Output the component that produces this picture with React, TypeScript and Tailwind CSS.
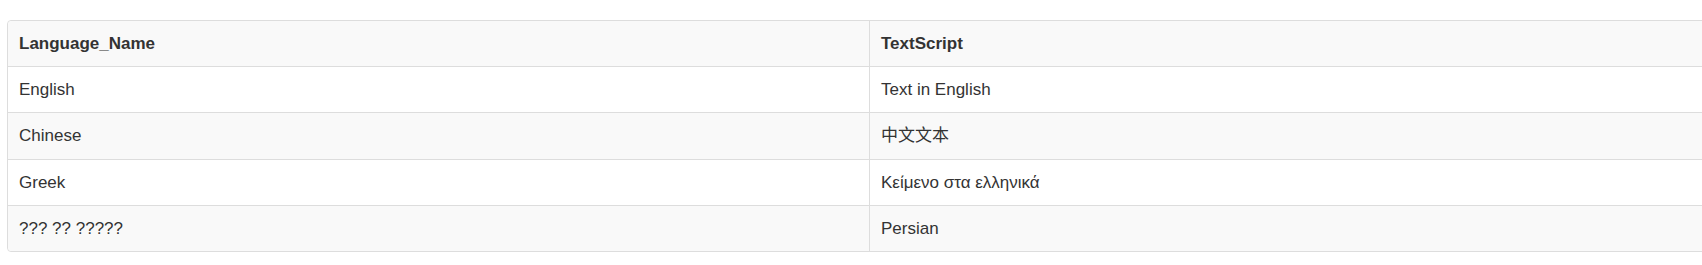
const ROWS = [
  { name: 'English', text: 'Text in English' },
  { name: 'Chinese', text: '中文文本' },
  { name: 'Greek', text: 'Κείμενο στα ελληνικά' },
  { name: '??? ?? ?????', text: 'Persian' },
];

export default function App() {
  return (
    <div className="w-[1702px] h-[265px] overflow-hidden bg-white pt-[20px] pl-[7px]">
      <div
        className="w-[1724px] rounded-[4px] border border-[#dddddd] text-[17px] leading-[25px] text-[#333333]"
        style={{ fontFamily: '"Liberation Sans", Arial, "Noto Sans CJK SC", sans-serif' }}
      >
        {/* Header */}
        <div className="grid grid-cols-[861px_1fr] rounded-t-[4px] bg-[#f9f9f9] font-bold">
          <div className="px-[11px] py-[10px]">Language_Name</div>
          <div className="border-l border-[#dddddd] px-[11px] py-[10px]">TextScript</div>
        </div>

        {ROWS.map((r, i) => (
          <div
            key={r.name}
            className={
              'grid grid-cols-[861px_1fr] border-t border-[#dddddd] ' +
              (i % 2 === 1 ? 'bg-[#f9f9f9] ' : 'bg-white ') +
              (i === ROWS.length - 1 ? 'rounded-b-[4px]' : '')
            }
          >
            <div className="px-[11px] py-[10px]">{r.name}</div>
            <div
              className={
                'border-l border-[#dddddd] px-[11px] py-[10px] ' +
                (r.name === 'Chinese' ? 'leading-[26px]' : '')
              }
            >
              {r.text}
            </div>
          </div>
        ))}
      </div>
    </div>
  );
}
